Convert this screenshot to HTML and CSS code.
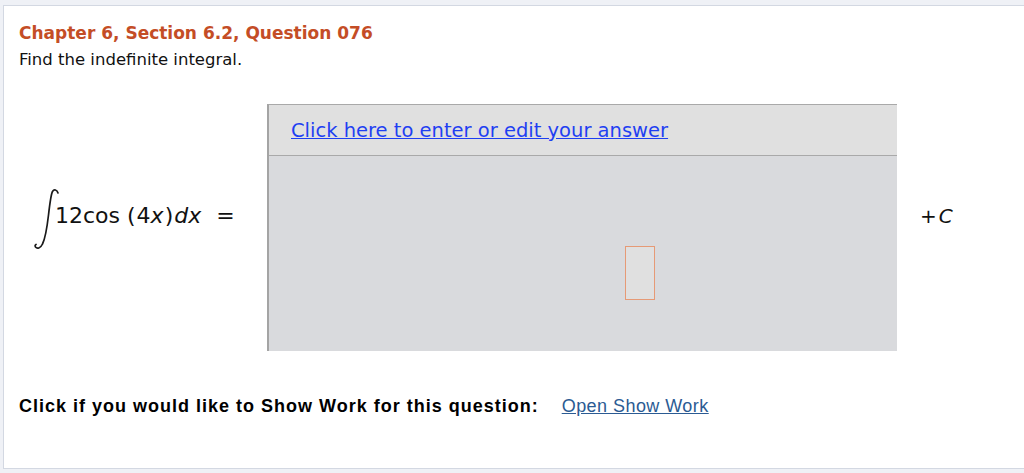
FILE: index.html
```html
<!DOCTYPE html>
<html>
<head>
<meta charset="utf-8">
<link rel="stylesheet" href="styles.css">
</head>
<body>
<div class="panel">
  <h1 class="title">Chapter 6, Section 6.2, Question 076</h1>
  <p class="prompt">Find the indefinite integral.</p>
  <div class="question">
    <div class="math">
      <svg class="integral" width="26" height="62" viewBox="0 0 26 62">
        <path d="M25 5 C24 1.5 21 1 19.5 3.5 C18 6 17 14 15.5 27 C14 40 12 51 9.5 56 C7.5 60.5 4 61 2.5 59 C1.8 58 2 57 3 56.5" fill="none" stroke="#1a1a1a" stroke-width="1.7" stroke-linecap="round"/>
      </svg>
      <span class="expr">12cos<span class="paren">(</span>4<i>x</i><span class="paren">)</span><i>d</i><i>x</i><span class="eq">=</span></span>
    </div>
    <div class="editor">
      <div class="editor-head"><a class="edit-link" href="#">Click here to enter or edit your answer</a></div>
      <div class="editor-body"><div class="slot"></div></div>
    </div>
    <div class="plusc"><span class="plus">+</span><i>C</i></div>
  </div>
  <div class="showwork">
    <span class="sw-label">Click if you would like to Show Work for this question:</span>
    <a class="sw-link" href="#">Open Show Work</a>
  </div>
</div>
</body>
</html>
```
FILE: styles.css
```css
html, body {
  margin: 0;
  padding: 0;
}
body {
  background: #eff1f6;
  width: 1024px;
  height: 473px;
  overflow: hidden;
}
.panel {
  box-sizing: border-box;
  margin: 5px 0 0 3px;
  width: 1021px;
  height: 464px;
  background: #ffffff;
  border: 1px solid #d3d8e2;
  border-right: none;
  padding: 17px 0 0 15px;
}
.title {
  margin: 0;
  font-family: "DejaVu Sans", Verdana, sans-serif;
  font-weight: bold;
  font-size: 17px;
  line-height: 21px;
  color: #c44d26;
}
.prompt {
  margin: 5px 0 0 0;
  font-family: "DejaVu Sans", Verdana, sans-serif;
  font-size: 16.5px;
  line-height: 22px;
  color: #111;
}
.question {
  display: flex;
  align-items: flex-start;
  margin-top: 33px;
}
.math {
  width: 248px;
  display: flex;
  align-items: flex-start;
  margin-top: 84px;
  padding-left: 14px;
  box-sizing: border-box;
}
.integral {
  display: block;
}
.expr {
  font-family: "DejaVu Sans", sans-serif;
  font-size: 22px;
  line-height: 26px;
  margin-top: 15px;
  margin-left: -4px;
  color: #111;
  white-space: nowrap;
}
.expr i {
  font-style: italic;
}
.paren {
  margin: 0 1px;
}
.paren:first-of-type {
  margin-left: 7px;
}
.eq {
  margin-left: 15px;
}
.editor {
  width: 630px;
  height: 247px;
  box-sizing: border-box;
  border-top: 1px solid #a9a9a9;
  border-left: 2px solid #a4a4a4;
  display: flex;
  flex-direction: column;
}
.editor-head {
  height: 51px;
  box-sizing: border-box;
  background: #e0e0e0;
  border-bottom: 1px solid #a9a9a9;
  padding: 14px 0 0 22px;
}
.edit-link {
  font-family: "DejaVu Sans", Verdana, sans-serif;
  font-size: 19.5px;
  line-height: 24px;
  color: #1f3ff2;
  text-decoration: underline;
}
.editor-body {
  flex: 1;
  background: #d9dadd;
  padding: 90px 0 0 356px;
}
.slot {
  width: 28px;
  height: 52px;
  background: #e0e0e0;
  border: 1px solid #e69a76;
}
.plusc {
  margin: 100px 0 0 23px;
  font-family: "DejaVu Sans", sans-serif;
  font-size: 20px;
  line-height: 24px;
  color: #111;
}
.plus {
  margin-right: 2px;
}
.showwork {
  margin-top: 45px;
  display: flex;
  align-items: baseline;
}
.sw-label {
  font-family: "Liberation Sans", Arial, sans-serif;
  font-weight: bold;
  font-size: 18px;
  letter-spacing: 1px;
  color: #000;
}
.sw-link {
  margin-left: 23px;
  font-family: "Liberation Sans", Arial, sans-serif;
  font-size: 18px;
  letter-spacing: 0.45px;
  color: #2b5b93;
  text-decoration: underline;
}
```
